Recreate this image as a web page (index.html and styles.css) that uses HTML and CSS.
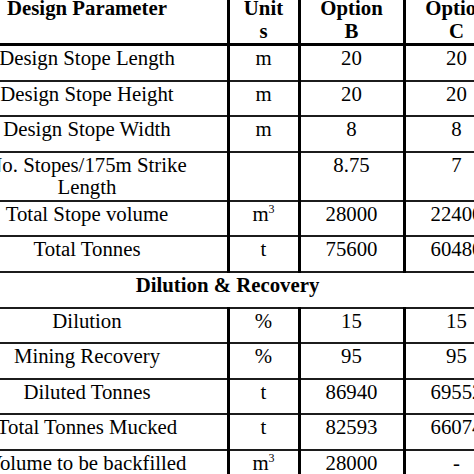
FILE: index.html
```html
<!DOCTYPE html>
<html>
<head>
<meta charset="utf-8">
<link rel="stylesheet" href="styles.css">
</head>
<body>
<table class="spec">
  <colgroup>
    <col class="c-param">
    <col class="c-unit">
    <col class="c-opt">
    <col class="c-opt">
  </colgroup>
  <thead>
    <tr>
      <th>Design Parameter</th>
      <th>Unit<br>s</th>
      <th>Option<br>B</th>
      <th>Option<br>C</th>
    </tr>
  </thead>
  <tbody>
    <tr><td>Design Stope Length</td><td>m</td><td>20</td><td>20</td></tr>
    <tr><td>Design Stope Height</td><td>m</td><td>20</td><td>20</td></tr>
    <tr><td>Design Stope Width</td><td>m</td><td>8</td><td>8</td></tr>
    <tr class="tall"><td>No. Stopes/175m Strike<br>Length</td><td></td><td>8.75</td><td>7</td></tr>
    <tr><td>Total Stope volume</td><td>m<sup>3</sup></td><td>28000</td><td>22400</td></tr>
    <tr><td>Total Tonnes</td><td>t</td><td>75600</td><td>60480</td></tr>
    <tr class="section"><td colspan="4">Dilution &amp; Recovery</td></tr>
    <tr><td>Dilution</td><td>%</td><td>15</td><td>15</td></tr>
    <tr><td>Mining Recovery</td><td>%</td><td>95</td><td>95</td></tr>
    <tr><td>Diluted Tonnes</td><td>t</td><td>86940</td><td>69552</td></tr>
    <tr><td>Total Tonnes Mucked</td><td>t</td><td>82593</td><td>66074</td></tr>
    <tr><td>Volume to be backfilled</td><td>m<sup>3</sup></td><td>28000</td><td>-</td></tr>
  </tbody>
</table>
</body>
</html>
```

FILE: styles.css
```css
html, body {
  margin: 0;
  padding: 0;
  background: #fff;
  overflow: hidden;
}

.spec {
  margin-left: -55.5px;
  margin-top: -4px;
  border-collapse: collapse;
  table-layout: fixed;
  width: 563px;
  font-family: "Liberation Serif", "Times New Roman", serif;
  font-size: 20.8px;
  line-height: 22.5px;
  color: #000;
}

.c-param { width: 282px; }
.c-unit { width: 71px; }
.c-opt { width: 105px; }

.spec th,
.spec td {
  text-align: center;
  vertical-align: top;
  padding: 1px 6px 1px;
  white-space: nowrap;
  border-left: 3px solid #000;
  border-right: 3px solid #000;
}

.spec th {
  font-weight: bold;
  border-bottom: 3px solid #000;
}

.spec td {
  height: 31.6px;
  border-bottom: 2px solid #1c1c1c;
}

.spec .tall td {
  height: auto;
}

.spec .section td {
  font-weight: bold;
  border-left: none;
  border-right: none;
}

.spec sup {
  font-size: 12px;
  line-height: 0;
  vertical-align: 8px;
}
```
